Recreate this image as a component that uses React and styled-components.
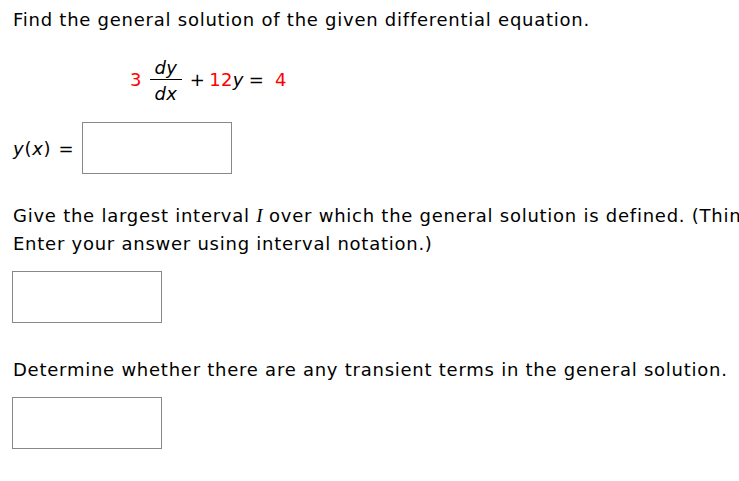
import React from "react";
import styled, { createGlobalStyle } from "styled-components";

const Global = createGlobalStyle`
  html, body { margin: 0; padding: 0; background: #fff; overflow: hidden; }
  body {
    font-family: "DejaVu Sans", Verdana, sans-serif;
    font-size: 18px;
    letter-spacing: 0.75px;
    color: #000;
  }
`;

const Page = styled.div`
  padding: 6px 0 0 13px;
  display: flex;
  flex-direction: column;
  align-items: flex-start;
  width: 1200px;
`;

const Line = styled.div`
  line-height: 28px;
  white-space: nowrap;
  margin-top: ${(p) => p.$mt || 0}px;
`;

const Equation = styled.div`
  display: flex;
  align-items: center;
  margin: 22px 0 0 117px;
  line-height: 28px;
  letter-spacing: 0.3px;
`;

const Term = styled.span`
  margin-left: ${(p) => p.$ml || 0}px;
  white-space: nowrap;
`;

const Red = styled.span`
  color: #ff0000;
`;

const Ital = styled.span`
  font-style: italic;
`;

const Fraction = styled.span`
  display: inline-flex;
  flex-direction: column;
  align-items: stretch;
  text-align: center;
  font-style: italic;
  margin: 2px 0 0 8px;
  width: 32px;
`;

const Num = styled.span`
  padding: 0 0 1px;
  border-bottom: 1px solid #000;
  line-height: 20px;
`;

const Den = styled.span`
  padding: 4px 0 0;
  line-height: 20px;
`;

const AnswerRow = styled.div`
  display: flex;
  align-items: center;
  margin-top: 18px;
`;

const Label = styled.span`
  line-height: 28px;
  padding-top: 2px;
  white-space: nowrap;
  margin-right: ${(p) => p.$mr || 0}px;
`;

const Box = styled.div`
  box-sizing: border-box;
  width: 150px;
  height: 52px;
  border: 1px solid #888;
  background: #fff;
  margin-top: ${(p) => p.$mt || 0}px;
  margin-left: ${(p) => p.$ml || 0}px;
`;

const SerifI = styled.span`
  font-family: "Liberation Serif", "Times New Roman", serif;
  font-style: italic;
  font-size: 19px;
  letter-spacing: 0;
`;

export default function App() {
  return (
    <>
      <Global />
      <Page>
        <Line>Find the general solution of the given differential equation.</Line>
        <Equation>
          <Red>3</Red>
          <Fraction>
            <Num>dy</Num>
            <Den>dx</Den>
          </Fraction>
          <Term $ml={8}>+</Term>
          <Term $ml={4}>
            <Red>12</Red>
            <Ital>y</Ital>
          </Term>
          <Term $ml={5}>=</Term>
          <Term $ml={11}>
            <Red>4</Red>
          </Term>
        </Equation>
        <AnswerRow>
          <Label $mr={7}>
            <Ital>y</Ital>(<Ital>x</Ital>)
          </Label>
          <Label $mr={8}>=</Label>
          <Box />
        </AnswerRow>
        <Line $mt={28}>
          Give the largest interval <SerifI>I</SerifI> over which the general solution is defined. (Think about the implications of any singular points.)
        </Line>
        <Line>Enter your answer using interval notation.)</Line>
        <Box $mt={13} $ml={-1} />
        <Line $mt={33}>Determine whether there are any transient terms in the general solution.</Line>
        <Box $mt={13} $ml={-1} />
      </Page>
    </>
  );
}
